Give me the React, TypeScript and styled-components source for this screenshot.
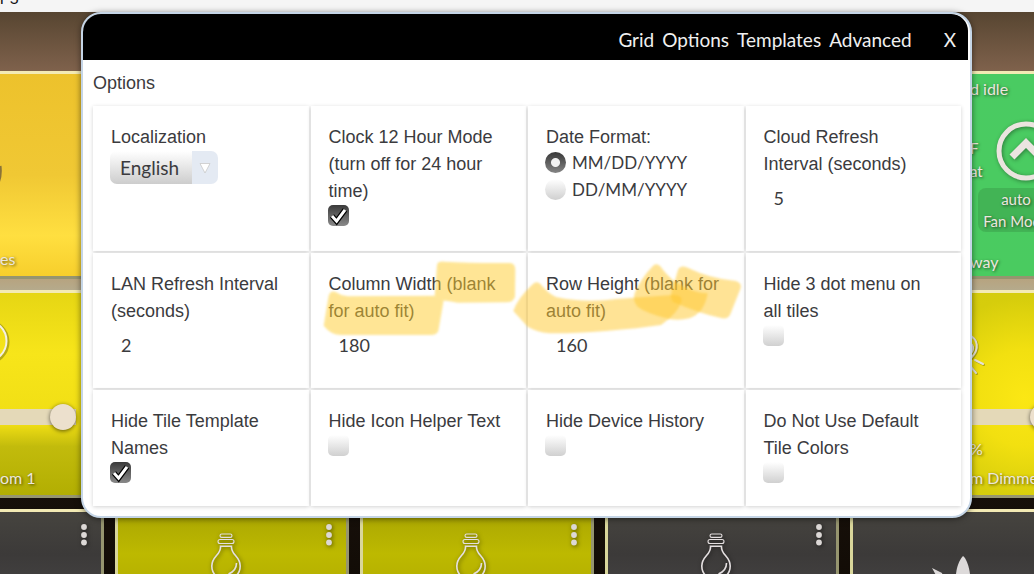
import React from "react";
import styled, { createGlobalStyle } from "styled-components";

const GlobalStyle = createGlobalStyle`
  *, *::before, *::after { box-sizing: border-box; }
  body { margin: 0; background: #1b1510; }
  button, input, select { font: inherit; color: inherit; margin: 0; }
`;

const humanist = `Lato, "Open Sans", sans-serif`;
const grotesque = `"Liberation Sans", Arial, sans-serif`;

const Page = styled.div`
  position: relative;
  display: flex;
  flex-direction: column;
  height: 100vh;
  overflow: hidden;
  font-family: ${humanist};
`;

const TopStrip = styled.div`
  flex: none;
  height: 12px;
  background: #f5f5f5;
  color: #111;
  display: flex;
  align-items: flex-end;
  overflow: hidden;
  font: 16px/24px ${grotesque};
  padding-bottom: 1px;
  white-space: pre;
`;

const Dashboard = styled.main`
  flex: 1;
  display: grid;
  grid-template-columns: 104px 234px 234px 234px 1fr;
  grid-template-rows: 208px 208px 1fr;
  gap: 11px;
  padding-top: 59px;
  background: linear-gradient(
    #574531 0,
    #7f624c 59px,
    #b8a078 260px,
    #b5aa8c 278px,
    #17100a 480px,
    #120c06 100%
  );
`;

const fills = {
  amber: "linear-gradient(#edc22c, #f0c834 50%, #ffdf40 80%, #f7cf2c)",
  green: "linear-gradient(#4acb62, #4acb60)",
  yellow: "linear-gradient(#e6d614, #f7e51a 30%, #f0de14 65%, #c2bb0c 76%, #b2ae02)",
  cloudy: "radial-gradient(circle at 95% 52%, #fbe714 0, #f2e010 24%, #d6cd0c 50%, #cfc80e 100%)",
  olive: "linear-gradient(#aaa602, #bdb900 60%, #b5b000)",
  grey: "linear-gradient(#46443f, #3c3a39 60%, #424040)",
};

const Tile = styled.section<{ $fill: keyof typeof fills; $col: number; $row: number }>`
  grid-column: ${(p) => p.$col};
  grid-row: ${(p) => p.$row};
  display: flex;
  flex-direction: column;
  overflow: hidden;
  min-width: 0;
  border: 3px solid #96956f;
  border-top-color: #f3eab4;
  border-left-color: #d9d69b;
  ${(p) => p.$col === 1 && "border-left: 0;"}
  ${(p) => p.$col === 5 && "border-right: 0; padding-left: 117px;"}
  background: ${(p) => fills[p.$fill]};
  color: #ece6de;
  font-size: 16px;
  line-height: 20px;
  white-space: nowrap;
  text-shadow: 1px 1px 3px rgba(0, 0, 0, 0.6);
`;

const StatusLine = styled.div`
  padding-top: 5px;
`;

const Thermostat = styled.div`
  display: flex;
  margin-top: 22px;
  height: 59px;
  svg { flex: none; filter: drop-shadow(1px 1px 2px rgba(0, 0, 0, 0.4)); }
`;

const Readings = styled.div`
  flex: none;
  width: 26px;
  padding-top: 16px;
  font-size: 15px;
  line-height: 23px;
`;

const FanMode = styled.div`
  flex: none;
  width: 76px;
  margin: 8px 0 20px 8px;
  border-radius: 8px;
  background: rgba(50, 130, 60, 0.3);
  text-align: center;
  font-size: 15px;
  line-height: 22px;
`;

const IconArea = styled.div<{ $tall?: boolean }>`
  height: ${(p) => (p.$tall ? 175 : 111)}px;
  flex: none;
  svg { display: block; overflow: visible; }
`;

const TileLabel = styled.div`
  line-height: 20px;
`;

const TileValue = styled.div`
  height: 38px;
  line-height: 38px;
`;

const Dimmer = styled.input`
  appearance: none;
  flex: none;
  width: 76px;
  height: 26px;
  background: linear-gradient(transparent 5px, #e4d9b8 5px, #e4d9b8 21px, transparent 21px);
  &::-webkit-slider-thumb {
    appearance: none;
    width: 26px;
    height: 26px;
    border-radius: 50%;
    background: #ece0cd;
    box-shadow: 0 1px 4px rgba(0, 0, 0, 0.6);
  }
`;

const WideDimmer = styled(Dimmer)`
  width: 86px;
`;

const TileTop = styled.div<{ $icon?: boolean }>`
  display: flex;
  justify-content: ${(p) => (p.$icon ? "space-between" : "flex-end")};
  padding: 10px 11px 0 90px;
  svg { flex: none; display: block; overflow: visible; filter: drop-shadow(1px 1px 2px rgba(0, 0, 0, 0.5)); }
`;

const MenuButton = styled.button`
  width: 12px;
  height: 26px;
  padding: 0;
  border: 0;
  background: none;
  color: #dcd8d6;
`;

const Modal = styled.div`
  position: absolute;
  top: 12px;
  left: 81px;
  right: 62px;
  padding: 0 2px 10px 0;
  border: 2px solid #c5d5e6;
  border-radius: 20px;
  background: #fff;
  color: #3b3b3e;
  overflow: hidden;
  box-shadow: 0 1px 6px rgba(0, 0, 0, 0.5);
`;

const ModalHeader = styled.header`
  display: flex;
  align-items: center;
  justify-content: flex-end;
  height: 46px;
  padding: 6px 12px 0 0;
  border-top-right-radius: 17px;
  background: #000;
  color: #f0f0f0;
  font-size: 19px;
`;

const Nav = styled.nav`
  display: flex;
  gap: 8px;
  margin-right: 32px;
`;

const HeaderButton = styled.button`
  padding: 0;
  border: 0;
  background: none;
  line-height: 24px;
`;

const Title = styled.h1`
  margin: 0;
  padding-left: 10px;
  font: 18px/46px ${grotesque};
`;

const OptionGrid = styled.div`
  display: grid;
  grid-template-columns: repeat(4, 1fr);
  grid-template-rows: minmax(145px, auto) minmax(135px, auto) minmax(116px, auto);
  gap: 2px;
  margin: 0 7px 0 10px;
`;

const Cell = styled.div`
  position: relative;
  padding: 18px 23px 0 18px;
  background: #fff;
  box-shadow: 0 1px 4px rgba(0, 0, 0, 0.18);
  font: 18px/27px ${grotesque};
`;

const Label = styled.label`
  display: block;
`;

const SelectWrap = styled.div`
  position: relative;
  width: 108px;
  margin-left: -1px;
  font-family: ${humanist};
  svg { position: absolute; right: 7px; top: 11px; pointer-events: none; }
`;

const Select = styled.select`
  appearance: none;
  display: block;
  width: 100%;
  height: 33px;
  padding: 0 10px;
  border: 0;
  border-radius: 7px;
  background: linear-gradient(90deg, transparent 82px, #e4eaf3 82px), linear-gradient(#fff, #cdcdcd);
  font-size: 19px;
`;

const NumberInput = styled.input`
  display: block;
  width: 100%;
  height: 34px;
  margin-top: 3px;
  padding: 0 10px;
  border: 0;
  background: none;
  font: 18px/34px ${humanist};
`;

const TickWrap = styled.div`
  position: relative;
  width: 21px;
  height: 21px;
  margin-left: -1px;
  svg { position: absolute; inset: 0; pointer-events: none; }
`;

const Tick = styled.input`
  appearance: none;
  display: block;
  width: 21px;
  height: 21px;
  border-radius: 5px;
  background: linear-gradient(#fff, #d0d0d0);
  &:checked { background: linear-gradient(#3a3a3a, #8a8a8a); }
`;

const Formats = styled.fieldset`
  margin: 0;
  padding: 0;
  border: 0;
  min-width: 0;
  legend { padding: 0; }
`;

const RadioRow = styled.label`
  display: flex;
  align-items: center;
  gap: 6px;
  height: 27px;
  margin-left: -1px;
  padding-bottom: 4px;
  font-family: ${humanist};
  font-size: 17px;
`;

const Radio = styled.input`
  appearance: none;
  width: 21px;
  height: 21px;
  border-radius: 50%;
  background: linear-gradient(#fff, #cfcfcf);
  &:checked {
    background: radial-gradient(circle, #f2f2f2 0 4px, transparent 5px), linear-gradient(#383838, #858585);
  }
`;

const Highlight = styled.svg<{ $left: number }>`
  position: absolute;
  z-index: 1;
  top: 2px;
  left: ${(p) => p.$left}px;
  pointer-events: none;
`;

function Menu() {
  return (
    <MenuButton aria-label="Tile menu">
      <svg width="12" height="26" viewBox="0 0 12 26" fill="currentColor">
        <circle cx="6" cy="5" r="2.9" />
        <circle cx="6" cy="13" r="2.9" />
        <circle cx="6" cy="20.5" r="2.9" />
      </svg>
    </MenuButton>
  );
}

function Bulb() {
  return (
    <svg width="36" height="60" viewBox="0 0 36 60" fill="none" stroke="#e4dfe0" strokeWidth="1.6">
      <rect x="12" y="12" width="12" height="3.4" rx="1.7" strokeWidth="1.1" />
      <rect x="10" y="17.5" width="16" height="4" rx="2" strokeWidth="1.1" />
      <path d="M12.500 24.2H23.500C22.700 33 32.200 34 32.200 44A14 14 0 0 1 3.800 44C3.800 34 13.300 33 12.500 24.2Z" />
      <path d="M28.500 41c0 6-3 9-8 11" />
    </svg>
  );
}

function CheckOption({ id, label, on }: { id: string; label: string; on?: boolean }) {
  const [checked, setChecked] = React.useState(!!on);
  return (
    <Cell>
      <Label htmlFor={id}>{label}</Label>
      <TickWrap>
        <Tick id={id} type="checkbox" checked={checked} onChange={() => setChecked(!checked)} />
        {checked && (
          <svg width="21" height="21" viewBox="0 0 21 21">
            <path d="M4 11l4.600 5.200L17 4.800" fill="none" stroke="#000" strokeWidth="5.4" />
            <path d="M4 11l4.600 5.200L17 4.800" fill="none" stroke="#fff" strokeWidth="3" />
          </svg>
        )}
      </TickWrap>
    </Cell>
  );
}

function NumberOption({ id, label, value, children }: { id: string; label: string; value: string; children?: React.ReactNode }) {
  return (
    <Cell>
      <Label htmlFor={id}>{label}</Label>
      <NumberInput id={id} type="text" inputMode="numeric" defaultValue={value} />
      {children}
    </Cell>
  );
}

export default function App() {
  return (
    <Page>
      <GlobalStyle />
      <TopStrip>r 5</TopStrip>
      <Dashboard>
        <Tile $fill="amber" $col={1} $row={1}>
          <IconArea $tall>
            <svg width="10" height="120" viewBox="0 0 10 120" aria-hidden="true">
              <path d="M-6 116C0 108 1 100 0 92" fill="none" stroke="#8a7338" strokeWidth="3" />
            </svg>
          </IconArea>
          <TileLabel>es</TileLabel>
        </Tile>
        <Tile $fill="green" $col={5} $row={1}>
          <StatusLine>d idle</StatusLine>
          <Thermostat>
            <Readings>
              <div>F</div>
              <div>at</div>
            </Readings>
            <svg width="60" height="60" viewBox="0 0 60 60" fill="none" stroke="#ebe4e0">
              <circle cx="30" cy="30" r="27" strokeWidth="5" />
              <path d="M16 36L30 22l14 14" strokeWidth="7" />
            </svg>
          </Thermostat>
          <FanMode>
            <div>auto</div>
            <div>Fan Mode</div>
          </FanMode>
          <div>way</div>
        </Tile>

        <Tile $fill="yellow" $col={1} $row={2}>
          <IconArea>
            <svg width="20" height="100" viewBox="0 0 20 100" fill="none" aria-hidden="true">
              <circle cx="-13" cy="49" r="21" stroke="#7a7410" strokeWidth="3" opacity="0.5" />
              <circle cx="-14" cy="48" r="20.5" stroke="#f4f0e4" strokeWidth="2" />
            </svg>
          </IconArea>
          <Dimmer type="range" aria-label="Room brightness" defaultValue={100} />
          <TileValue />
          <TileLabel>om 1</TileLabel>
        </Tile>
        <Tile $fill="cloudy" $col={5} $row={2}>
          <IconArea>
            <svg width="20" height="100" viewBox="0 0 20 100" fill="none" stroke="#e6e2da" strokeWidth="2" strokeLinecap="round" aria-hidden="true">
              <path d="M0 43c9 4 11 14 2 23M0 51c6 2 5 8 0 12M6 68l8 4M2 75l5 6" stroke="#6f6b10" opacity="0.5" />
              <path d="M-1 42c9 4 11 14 2 23M-1 50c6 2 5 8 0 12M5 67l8 4M1 74l5 6" />
            </svg>
          </IconArea>
          <WideDimmer type="range" aria-label="Dimmer brightness" defaultValue={100} />
          <TileValue>%</TileValue>
          <TileLabel>m Dimmer</TileLabel>
        </Tile>

        <Tile $fill="grey" $col={1} $row={3}>
          <TileTop><Menu /></TileTop>
        </Tile>
        {(["olive", "olive", "grey"] as const).map((fill, i) => (
          <Tile key={i} $fill={fill} $col={i + 2} $row={3}>
            <TileTop $icon><Bulb /><Menu /></TileTop>
          </Tile>
        ))}
        <Tile $fill="grey" $col={5} $row={3}>
          <svg width="60" height="60" viewBox="0 0 60 60" overflow="visible" aria-hidden="true">
            <path d="M-14 62C-13 52-9 46-7 44C-4 46-1 54 0 62Z" fill="#dddada" />
            <path d="M-38 56l10 5 1 4h-6Z" fill="#dddada" />
          </svg>
        </Tile>
      </Dashboard>

      <Modal role="dialog" aria-label="Options">
        <ModalHeader>
          <Nav>
            <HeaderButton>Grid</HeaderButton>
            <HeaderButton>Options</HeaderButton>
            <HeaderButton>Templates</HeaderButton>
            <HeaderButton>Advanced</HeaderButton>
          </Nav>
          <HeaderButton>X</HeaderButton>
        </ModalHeader>
        <Title>Options</Title>
        <OptionGrid>
          <Cell>
            <Label htmlFor="locale">Localization</Label>
            <SelectWrap>
              <Select id="locale" defaultValue="English">
                <option>English</option>
              </Select>
              <svg width="12" height="12" viewBox="0 0 12 12">
                <path d="M1 1.500H11L6 11Z" fill="#fff" stroke="#c9c9c9" strokeWidth="0.8" />
              </svg>
            </SelectWrap>
          </Cell>
          <CheckOption id="clock" label="Clock 12 Hour Mode (turn off for 24 hour time)" on />
          <Cell>
            <Formats>
              <legend>Date Format:</legend>
              <RadioRow><Radio type="radio" name="fmt" defaultChecked />MM/DD/YYYY</RadioRow>
              <RadioRow><Radio type="radio" name="fmt" />DD/MM/YYYY</RadioRow>
            </Formats>
          </Cell>
          <NumberOption id="cloud" label="Cloud Refresh Interval (seconds)" value="5" />
          <NumberOption id="lan" label="LAN Refresh Interval (seconds)" value="2" />
          <NumberOption id="col" label="Column Width (blank for auto fit)" value="180">
            <Highlight $left={0} width="220" height="85" viewBox="0 0 660 255" fill="#ffcd2d" aria-hidden="true">
              <filter id="soft"><feGaussianBlur stdDeviation="3" /></filter>
              <g opacity="0.5" filter="url(#soft)">
                <path d="M378 30Q380 18 400 20Q480 25 598 24Q613 26 613 45L612 125Q606 142 588 142L440 143Q400 135 370 135Z" />
                <path d="M53 122Q58 106 72 110Q90 122 110 124L385 122Q400 124 397 142L382 228Q376 241 358 240H90Q60 240 38 212Z" />
              </g>
            </Highlight>
          </NumberOption>
          <NumberOption id="row" label="Row Height (blank for auto fit)" value="160">
            <Highlight $left={-22} width="245" height="85" viewBox="0 0 735 255" fill="#ffc82d" aria-hidden="true">
              <g opacity="0.5" filter="url(#soft)">
                <path d="M22 168Q35 130 80 88Q92 75 104 88Q125 115 150 126Q240 145 330 132L500 120Q530 118 526 140Q515 175 465 210Q400 220 300 228Q200 236 130 235Q90 230 65 215Z" />
              </g>
              <g opacity="0.5" filter="url(#soft)">
                <path d="M440 34Q450 22 463 34Q475 52 500 75Q560 115 605 115Q595 175 550 190Q520 197 490 192Q420 175 395 155Q375 135 390 105Q410 65 440 34Z" />
              </g>
              <g opacity="0.5" filter="url(#soft)">
                <path d="M516 45Q522 28 545 38Q610 70 690 78Q708 84 704 100L672 180Q664 194 645 189Q580 175 500 140Q490 125 500 100Z" />
              </g>
            </Highlight>
          </NumberOption>
          <CheckOption id="dots" label="Hide 3 dot menu on all tiles" />
          <CheckOption id="names" label="Hide Tile Template Names" on />
          <CheckOption id="helper" label="Hide Icon Helper Text" />
          <CheckOption id="history" label="Hide Device History" />
          <CheckOption id="colors" label="Do Not Use Default Tile Colors" />
        </OptionGrid>
      </Modal>
    </Page>
  );
}
